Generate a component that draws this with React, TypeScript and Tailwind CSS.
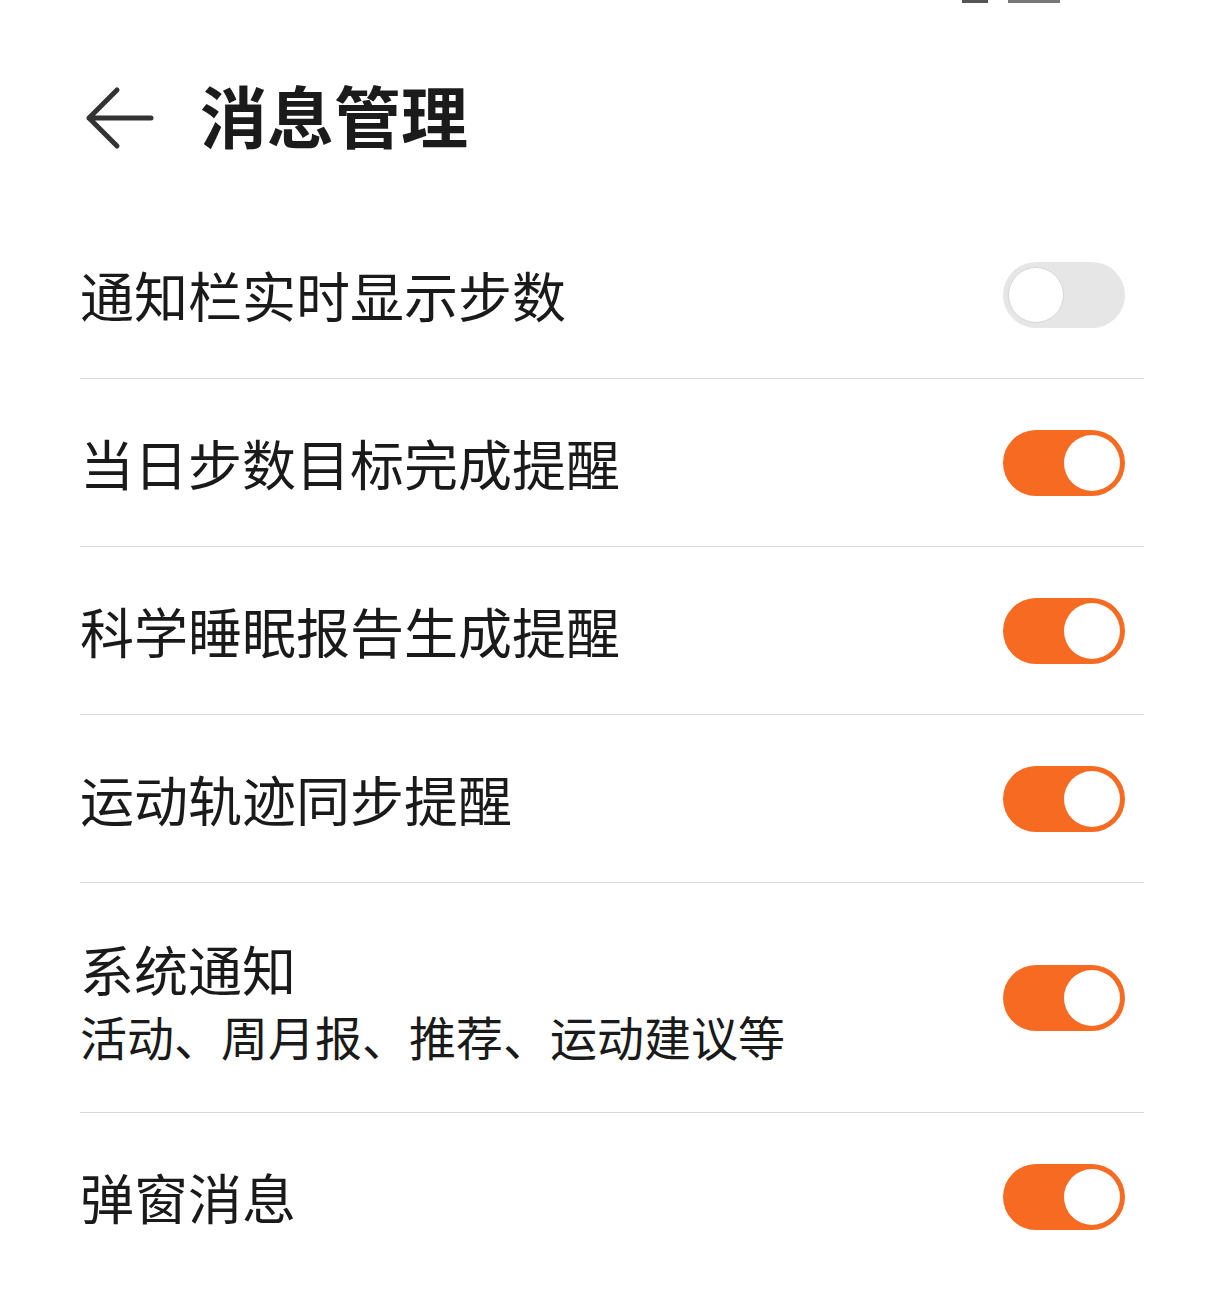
import { useState } from "react";

const FONT = { fontFamily: '"Noto Sans CJK SC", "Noto Sans", sans-serif' };

type Item = { title: string; sub?: string; on: boolean };

const ITEMS: Item[] = [
  { title: "通知栏实时显示步数", on: false },
  { title: "当日步数目标完成提醒", on: true },
  { title: "科学睡眠报告生成提醒", on: true },
  { title: "运动轨迹同步提醒", on: true },
  { title: "系统通知", sub: "活动、周月报、推荐、运动建议等", on: true },
  { title: "弹窗消息", on: true },
];

function Toggle({ on, onClick }: { on: boolean; onClick: () => void }) {
  return (
    <button
      onClick={onClick}
      className={`mr-[19px] flex h-[66px] w-[122px] shrink-0 items-center rounded-full p-[5px] ${
        on ? "justify-end bg-[#f76a22]" : "justify-start bg-[#e6e6e6]"
      }`}
    >
      <span
        className={`block h-[56px] w-[56px] rounded-full bg-white ${
          on ? "" : "border border-[#d6d6d6]"
        }`}
      />
    </button>
  );
}

export default function App() {
  const [items, setItems] = useState(ITEMS);

  const flip = (i: number) =>
    setItems((prev) => prev.map((it, j) => (j === i ? { ...it, on: !it.on } : it)));

  return (
    <div className="min-h-[1312px] w-[1224px] bg-white text-[#1a1a1a]" style={FONT}>
      {/* status bar leftovers */}
      <div className="flex h-[3px] items-start">
        <div className="ml-[962px] h-[3px] w-[26px] bg-[#555]" />
        <div className="ml-[20px] h-[3px] w-[52px] bg-[#777]" />
      </div>

      <div className="flex h-[208px] items-center px-[85px] pt-[21px]">
        <svg width="70" height="64" viewBox="0 0 70 64" fill="none" className="shrink-0">
          <path
            d="M4 32 H66 M4 32 L32 4 M4 32 L32 60"
            stroke="#333"
            strokeWidth="5"
            strokeLinecap="round"
            strokeLinejoin="round"
          />
        </svg>
        <h1 className="mb-[8px] ml-[45px] text-[67px] font-semibold leading-none text-[#1b1b1b]">
          消息管理
        </h1>
      </div>

      <div className="px-[80px]">
        {items.map((it, i) => (
          <div
            key={it.title}
            className={`flex items-center justify-between ${it.sub ? "h-[230px]" : "h-[168px]"} ${
              i < items.length - 1 ? "border-b-[1.5px] border-[#d9d9d9]" : ""
            }`}
          >
            {it.sub ? (
              <div className="mt-[8px]">
                <div className="text-[54px] leading-[68px]">{it.title}</div>
                <div className="text-[47px] leading-[66px]">{it.sub}</div>
              </div>
            ) : (
              <div className="text-[54px] leading-none">{it.title}</div>
            )}
            <Toggle on={it.on} onClick={() => flip(i)} />
          </div>
        ))}
      </div>
    </div>
  );
}
